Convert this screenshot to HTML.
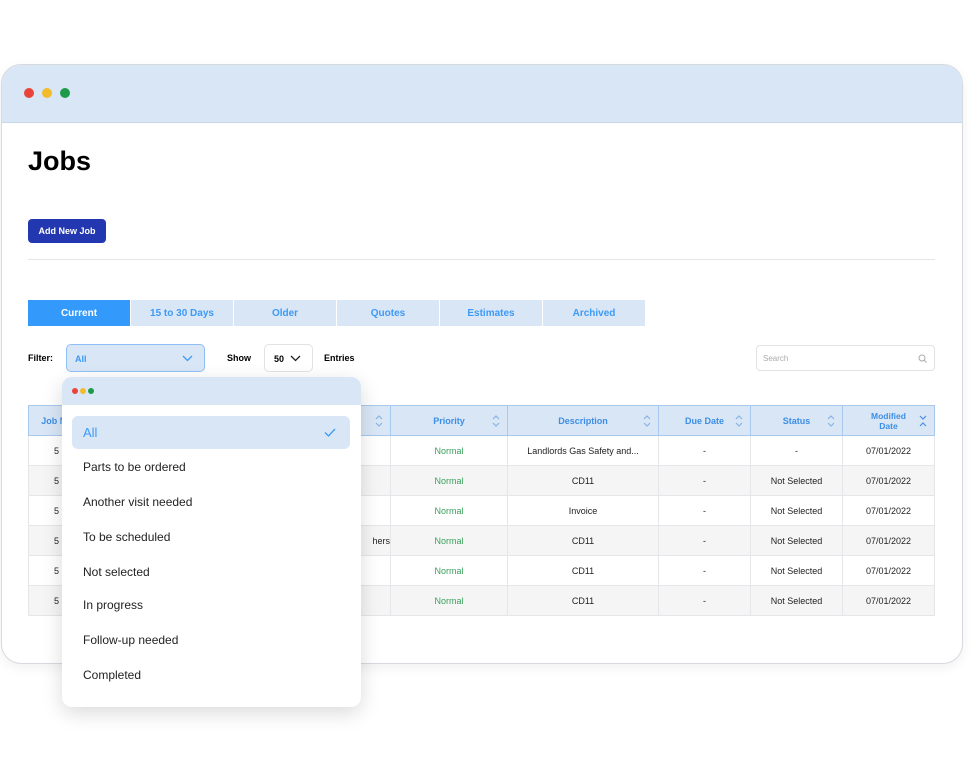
<!DOCTYPE html>
<html><head><style>
*{margin:0;padding:0;box-sizing:border-box}
body{width:980px;height:771px;background:#fff;font-family:"Liberation Sans",sans-serif;position:relative;overflow:hidden}
.win{position:absolute;left:1px;top:64px;width:962px;height:600px;border:1px solid #d6d9de;border-radius:20px;background:#fff;overflow:hidden;box-shadow:0 4px 12px rgba(0,0,0,.06)}
.hdr{height:58px;background:#d8e6f6;border-bottom:1px solid #c9d6e6}
.dot{position:absolute;border-radius:50%;width:10px;height:10px}
.abs{position:absolute}
.tab{position:absolute;top:300px;height:26px;width:102px;background:#d8e6f6;color:#3d9af5;font-size:10px;font-weight:bold;text-align:center;line-height:27px}
table{position:absolute;left:28px;top:405px;width:907px;border-collapse:collapse;font-size:9px}
th{background:#d8e6f6;color:#3d8ee6;height:30px;border:1px solid #a9c8ee;font-weight:bold;position:relative}
td{height:30px;text-align:center;border:1px solid #e4e6ea;color:#222}
tr:nth-child(odd) td{background:#f5f5f5}
.g{color:#3aa05a}
.arr{position:absolute;right:7px;top:9px}
.dd{position:absolute;left:62px;top:377px;width:299px;height:330px;background:#fff;border-radius:10px;box-shadow:0 6px 20px rgba(0,0,0,.15);overflow:hidden}
.dd .h{height:28px;background:#d8e6f6}
.it{position:absolute;left:21px;font-size:12px;color:#222}
</style></head><body>
<div class="win"><div class="hdr"></div>
<div class="dot" style="left:22px;top:23px;background:#e9443a"></div>
<div class="dot" style="left:40px;top:23px;background:#f2bb2b"></div>
<div class="dot" style="left:58px;top:23px;background:#1f9a4a"></div>
</div>
<div class="abs" style="left:28px;top:146px;font-size:27px;font-weight:bold;color:#000">Jobs</div>
<div class="abs" style="left:28px;top:219px;width:78px;height:24px;background:#2338b0;border-radius:4px;color:#fff;font-size:9px;font-weight:bold;text-align:center;line-height:24px">Add New Job</div>
<div class="abs" style="left:28px;top:259px;width:907px;height:1px;background:#e3e5e8"></div>
<div class="tab" style="left:28px;background:#3399fb;color:#fff">Current</div>
<div class="tab" style="left:131px">15 to 30 Days</div>
<div class="tab" style="left:234px">Older</div>
<div class="tab" style="left:337px">Quotes</div>
<div class="tab" style="left:440px">Estimates</div>
<div class="tab" style="left:543px">Archived</div>
<div class="abs" style="left:28px;top:353px;font-size:9px;font-weight:bold">Filter:</div>
<div class="abs" style="left:66px;top:344px;width:139px;height:28px;border:1px solid #8fc0f5;background:#d8e6f6;border-radius:5px;color:#3d9af5;font-size:9px;font-weight:bold;padding:9px 8px">All<svg style="position:absolute;right:11px;top:10px" width="11" height="7" viewBox="0 0 11 7"><path d="M1 1l4.5 4.5L10 1" fill="none" stroke="#3d9af5" stroke-width="1.3"/></svg></div>
<div class="abs" style="left:227px;top:353px;font-size:9px;font-weight:bold">Show</div>
<div class="abs" style="left:264px;top:344px;width:49px;height:28px;border:1px solid #e0e2e6;border-radius:5px;font-size:9px;font-weight:bold;padding:9px 9px">50<svg style="position:absolute;right:11px;top:10px" width="11" height="7" viewBox="0 0 11 7"><path d="M1 1l4.5 4.5L10 1" fill="none" stroke="#222" stroke-width="1.3"/></svg></div>
<div class="abs" style="left:324px;top:353px;font-size:9px;font-weight:bold">Entries</div>
<div class="abs" style="left:756px;top:345px;width:179px;height:26px;border:1px solid #e0e2e6;border-radius:4px;font-size:8px;color:#aaa;padding:8px 6px">Search<svg style="position:absolute;right:7px;top:8px" width="9" height="9" viewBox="0 0 9 9"><circle cx="4" cy="4" r="3" fill="none" stroke="#aaa"/><path d="M6.2 6.2L8.5 8.5" stroke="#aaa"/></svg></div>
<table>
<tr><th style="width:56px">Job No</th><th style="width:306px"><svg class="arr" width="8" height="12" viewBox="0 0 8 12"><path d="M1 4l3-3 3 3M1 8l3 3 3-3" fill="none" stroke="#8ab3e8" stroke-width="1.2"/></svg></th><th style="width:117px">Priority<svg class="arr" width="8" height="12" viewBox="0 0 8 12"><path d="M1 4l3-3 3 3M1 8l3 3 3-3" fill="none" stroke="#8ab3e8" stroke-width="1.2"/></svg></th><th style="width:151px">Description<svg class="arr" width="8" height="12" viewBox="0 0 8 12"><path d="M1 4l3-3 3 3M1 8l3 3 3-3" fill="none" stroke="#8ab3e8" stroke-width="1.2"/></svg></th><th style="width:92px">Due Date<svg class="arr" width="8" height="12" viewBox="0 0 8 12"><path d="M1 4l3-3 3 3M1 8l3 3 3-3" fill="none" stroke="#8ab3e8" stroke-width="1.2"/></svg></th><th style="width:92px">Status<svg class="arr" width="8" height="12" viewBox="0 0 8 12"><path d="M1 4l3-3 3 3M1 8l3 3 3-3" fill="none" stroke="#8ab3e8" stroke-width="1.2"/></svg></th><th style="font-size:8.5px">Modified<br>Date<svg class="arr" width="8" height="12" viewBox="0 0 8 12"><path d="M1 1l3 3 3-3M1 11l3-3 3 3" fill="none" stroke="#4a90e2" stroke-width="1.2"/></svg></th></tr>
<tr><td>5</td><td></td><td class="g">Normal</td><td>Landlords Gas Safety and...</td><td>-</td><td>-</td><td>07/01/2022</td></tr>
<tr><td>5</td><td></td><td class="g">Normal</td><td>CD11</td><td>-</td><td>Not Selected</td><td>07/01/2022</td></tr>
<tr><td>5</td><td></td><td class="g">Normal</td><td>Invoice</td><td>-</td><td>Not Selected</td><td>07/01/2022</td></tr>
<tr><td>5</td><td style="text-align:right">hers</td><td class="g">Normal</td><td>CD11</td><td>-</td><td>Not Selected</td><td>07/01/2022</td></tr>
<tr><td>5</td><td></td><td class="g">Normal</td><td>CD11</td><td>-</td><td>Not Selected</td><td>07/01/2022</td></tr>
<tr><td>5</td><td></td><td class="g">Normal</td><td>CD11</td><td>-</td><td>Not Selected</td><td>07/01/2022</td></tr>
</table>
<div class="dd"><div class="h"></div>
<div class="dot" style="left:10px;top:11px;width:6px;height:6px;background:#e9443a"></div>
<div class="dot" style="left:18px;top:11px;width:6px;height:6px;background:#f2bb2b"></div>
<div class="dot" style="left:26px;top:11px;width:6px;height:6px;background:#1f9a4a"></div>
<div class="abs" style="left:10px;top:39px;width:278px;height:33px;background:#d8e6f6;border-radius:6px"></div>
<div class="it" style="top:48px;color:#3d9af5;font-size:13px">All</div>
<svg class="abs" style="left:262px;top:51px" width="12" height="9" viewBox="0 0 12 9"><path d="M1 4.5l3.5 3.5L11 1" fill="none" stroke="#3d9af5" stroke-width="1.3"/></svg>
<div class="it" style="top:83px">Parts to be ordered</div>
<div class="it" style="top:118px">Another visit needed</div>
<div class="it" style="top:153px">To be scheduled</div>
<div class="it" style="top:188px">Not selected</div>
<div class="it" style="top:221px">In progress</div>
<div class="it" style="top:256px">Follow-up needed</div>
<div class="it" style="top:291px">Completed</div>
</div>
</body></html>
